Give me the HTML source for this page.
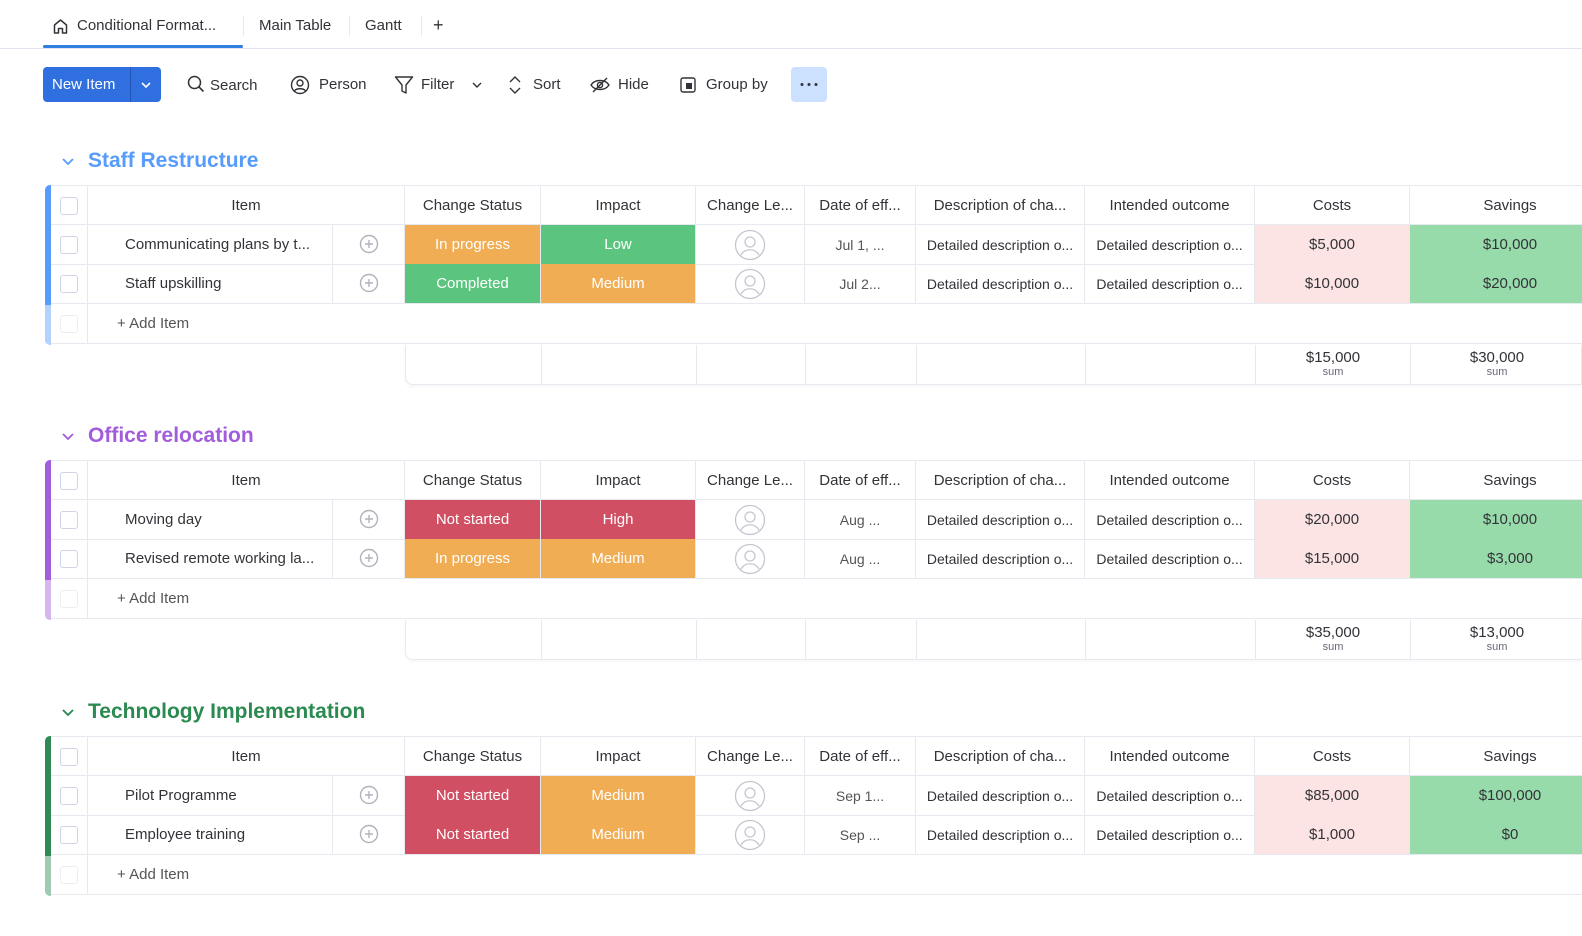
<!DOCTYPE html>
<html><head><meta charset="utf-8"><style>
*{box-sizing:border-box;margin:0;padding:0}
body{width:1582px;height:889px;overflow:hidden;background:#fff;font-family:"Liberation Sans",sans-serif;color:#323338;position:relative}
.a{position:absolute}
.tab{position:absolute;top:17px;font-size:15px;color:#323338}
.sep{position:absolute;top:16px;width:1px;height:20px;background:#e6e9ef}
.tb{position:absolute;top:76px;font-size:15px;color:#323338}
.g{position:absolute;left:0;width:1582px;height:200px}
.title{position:absolute;left:88px;top:-36px;font-size:21px;font-weight:bold}
.chev{position:absolute;left:61px;top:-28px}
.bar{position:absolute;left:45px;top:0;width:6px;height:120px;border-top-left-radius:5px}
.bar2{position:absolute;left:45px;top:120px;width:6px;height:40px;border-bottom-left-radius:5px;opacity:.45}
.r{position:absolute;left:51px;width:1531px;height:40px;border-bottom:1px solid #e6e9ef;border-top:1px solid #e6e9ef}
.c{position:absolute;top:0;height:39px;border-right:1px solid #e6e9ef;display:flex;align-items:center;justify-content:center;font-size:15px;white-space:nowrap;overflow:hidden}
.cb{left:0;width:37px}.it{left:37px;width:245px}.cm{left:282px;width:72px}.st{left:354px;width:136px}.im{left:490px;width:155px}.pe{left:645px;width:109px}.dt{left:754px;width:111px}.ds{left:865px;width:169px}.oc{left:1034px;width:170px}.co{left:1204px;width:155px}.sv{left:1359px;width:200px;border-right:none}
.box{width:18px;height:18px;border:1px solid #d0d4e4;border-radius:3px}
.itx{justify-content:flex-start;padding-left:37px}
.w{color:#fff}
.or{background:#f0ad53}.gr{background:#5bc47e}.rd{background:#d14f63}
.pk{background:#fde4e4}.lg{background:#97dbab}
.sm{font-size:14px}
.dtc{color:#555;font-size:14px}
.sumr{position:absolute;left:405px;top:160px;width:1177px;height:40px;border:1px solid #e6e9ef;border-top:none;border-bottom-left-radius:8px;box-shadow:0 2px 3px rgba(0,0,0,.04)}
.sumr .c{height:39px;flex-direction:column;line-height:14px}
.sumr .s{font-size:11px;color:#676879}
</style></head><body>

<div class="a" style="left:0;top:48px;width:1582px;height:1px;background:#e1e4ec"></div>
<div class="a" style="left:43px;top:45px;width:200px;height:3px;background:#2f7de1;border-radius:2px"></div>
<svg class="a" style="left:52px;top:18px" width="17" height="17" viewBox="0 0 17 17"><path d="M2.5 15V7L8.5 2l6 5v8h-4v-4.5h-4V15z" fill="none" stroke="#323338" stroke-width="1.5" stroke-linejoin="round"/></svg>
<div class="tab" style="left:77px">Conditional Format...</div>
<div class="sep" style="left:243px"></div>
<div class="tab" style="left:259px">Main Table</div>
<div class="sep" style="left:349px"></div>
<div class="tab" style="left:365px">Gantt</div>
<div class="sep" style="left:421px"></div>
<div class="tab" style="left:433px;top:15px;font-size:18px">+</div>

<div class="a" style="left:43px;top:67px;width:118px;height:35px;background:#2f6fe0;border-radius:4px"></div>
<div class="a" style="left:130px;top:67px;width:1px;height:35px;background:#2255b5"></div>
<div class="a" style="left:52px;top:76px;color:#fff;font-size:15px">New Item</div>
<svg class="a" style="left:140px;top:80px" width="12" height="10"><path d="M2 3l4 4 4-4" fill="none" stroke="#fff" stroke-width="1.6"/></svg>

<svg class="a" style="left:187px;top:75px" width="18" height="18"><circle cx="7.5" cy="7.5" r="6" fill="none" stroke="#323338" stroke-width="1.5"/><path d="M12 12l4.5 4.5" stroke="#323338" stroke-width="1.6"/></svg>
<div class="tb" style="left:210px;top:77px">Search</div>
<svg class="a" style="left:290px;top:75px" width="20" height="20"><circle cx="10" cy="10" r="8.5" fill="none" stroke="#323338" stroke-width="1.4"/><circle cx="10" cy="8" r="3" fill="none" stroke="#323338" stroke-width="1.4"/><path d="M4.5 16c1.5-3 9.5-3 11 0" fill="none" stroke="#323338" stroke-width="1.4"/></svg>
<div class="tb" style="left:319px">Person</div>
<svg class="a" style="left:394px;top:75px" width="20" height="20"><path d="M1.5 2h17l-6.5 8v8l-4-2v-6z" fill="none" stroke="#323338" stroke-width="1.4" stroke-linejoin="round"/></svg>
<div class="tb" style="left:421px">Filter</div>
<svg class="a" style="left:471px;top:80px" width="12" height="10"><path d="M2 3l4 4 4-4" fill="none" stroke="#323338" stroke-width="1.4"/></svg>
<svg class="a" style="left:508px;top:75px" width="14" height="20"><path d="M2 7l5-5 5 5M2 13l5 5 5-5" fill="none" stroke="#323338" stroke-width="1.4"/></svg>
<div class="tb" style="left:533px">Sort</div>
<svg class="a" style="left:590px;top:76px" width="20" height="18"><path d="M1 9c4-6 14-6 18 0-4 6-14 6-18 0z" fill="none" stroke="#323338" stroke-width="1.4"/><circle cx="10" cy="9" r="2.6" fill="none" stroke="#323338" stroke-width="1.4"/><path d="M3 16L17 2" stroke="#323338" stroke-width="1.4"/></svg>
<div class="tb" style="left:618px">Hide</div>
<svg class="a" style="left:680px;top:77px" width="16" height="16"><rect x="1" y="1" width="14" height="14" rx="2" fill="none" stroke="#323338" stroke-width="1.4"/><rect x="6" y="6" width="6" height="6" fill="#323338"/></svg>
<div class="tb" style="left:706px">Group by</div>
<div class="a" style="left:791px;top:67px;width:36px;height:35px;background:#cce1ff;border-radius:4px"></div>
<svg class="a" style="left:799px;top:82px" width="20" height="5"><circle cx="3" cy="2.5" r="1.5" fill="#323338"/><circle cx="10" cy="2.5" r="1.5" fill="#323338"/><circle cx="17" cy="2.5" r="1.5" fill="#323338"/></svg>

<!-- GROUP 1 -->
<div class="g" style="top:185px">
<svg class="chev" width="14" height="10"><path d="M2 2l5 5 5-5" fill="none" stroke="#579bfc" stroke-width="1.8"/></svg>
<div class="title" style="color:#579bfc">Staff Restructure</div>
<div class="bar" style="background:#579bfc"></div><div class="bar2" style="background:#579bfc"></div>
<div class="r" style="top:0"><div class="c cb"><div class="box"></div></div><div class="c it" style="width:317px">Item</div><div class="c st">Change Status</div><div class="c im">Impact</div><div class="c pe">Change Le...</div><div class="c dt">Date of eff...</div><div class="c ds">Description of cha...</div><div class="c oc">Intended outcome</div><div class="c co">Costs</div><div class="c sv">Savings</div></div>
<div class="r" style="top:40px;border-top:none"><div class="c cb"><div class="box"></div></div><div class="c it itx">Communicating plans by t...</div><div class="c cm"><svg width="22" height="22"><circle cx="11" cy="10" r="8.5" fill="none" stroke="#b0b3bd" stroke-width="1.4"/><path d="M11 6v8M7 10h8" stroke="#b0b3bd" stroke-width="1.4"/></svg></div><div class="c st or w">In progress</div><div class="c im gr w">Low</div><div class="c pe"><svg width="32" height="32"><circle cx="16" cy="16" r="14.5" fill="none" stroke="#c5c7d0" stroke-width="1.3"/><circle cx="16" cy="13" r="5" fill="none" stroke="#c5c7d0" stroke-width="1.3"/><path d="M7 26c4-7 14-7 18 0" fill="none" stroke="#c5c7d0" stroke-width="1.3"/></svg></div><div class="c dt dtc">Jul 1, ...</div><div class="c ds sm">Detailed description o...</div><div class="c oc sm">Detailed description o...</div><div class="c co pk">$5,000</div><div class="c sv lg">$10,000</div></div>
<div class="r" style="top:79px;border-top:none"><div class="c cb"><div class="box"></div></div><div class="c it itx">Staff upskilling</div><div class="c cm"><svg width="22" height="22"><circle cx="11" cy="10" r="8.5" fill="none" stroke="#b0b3bd" stroke-width="1.4"/><path d="M11 6v8M7 10h8" stroke="#b0b3bd" stroke-width="1.4"/></svg></div><div class="c st gr w">Completed</div><div class="c im or w">Medium</div><div class="c pe"><svg width="32" height="32"><circle cx="16" cy="16" r="14.5" fill="none" stroke="#c5c7d0" stroke-width="1.3"/><circle cx="16" cy="13" r="5" fill="none" stroke="#c5c7d0" stroke-width="1.3"/><path d="M7 26c4-7 14-7 18 0" fill="none" stroke="#c5c7d0" stroke-width="1.3"/></svg></div><div class="c dt dtc">Jul 2...</div><div class="c ds sm">Detailed description o...</div><div class="c oc sm">Detailed description o...</div><div class="c co pk">$10,000</div><div class="c sv lg">$20,000</div></div>
<div class="r" style="top:119px;border-top:none"><div class="c cb"><div class="box" style="border-color:#eceef3"></div></div><div class="c" style="left:37px;width:1494px;border:none;justify-content:flex-start;padding-left:29px;color:#555">+ Add Item</div></div>
<div class="sumr"><div class="c" style="left:0;width:136px"></div><div class="c" style="left:136px;width:155px"></div><div class="c" style="left:291px;width:109px"></div><div class="c" style="left:400px;width:111px"></div><div class="c" style="left:511px;width:169px"></div><div class="c" style="left:680px;width:170px"></div><div class="c" style="left:850px;width:155px"><div>$15,000</div><div class="s">sum</div></div><div class="c" style="left:1005px;width:172px;border:none"><div>$30,000</div><div class="s">sum</div></div></div>
</div>

<!-- GROUP 2 -->
<div class="g" style="top:460px">
<svg class="chev" width="14" height="10"><path d="M2 2l5 5 5-5" fill="none" stroke="#a25ddc" stroke-width="1.8"/></svg>
<div class="title" style="color:#a25ddc">Office relocation</div>
<div class="bar" style="background:#a25ddc"></div><div class="bar2" style="background:#a25ddc"></div>
<div class="r" style="top:0"><div class="c cb"><div class="box"></div></div><div class="c it" style="width:317px">Item</div><div class="c st">Change Status</div><div class="c im">Impact</div><div class="c pe">Change Le...</div><div class="c dt">Date of eff...</div><div class="c ds">Description of cha...</div><div class="c oc">Intended outcome</div><div class="c co">Costs</div><div class="c sv">Savings</div></div>
<div class="r" style="top:40px;border-top:none"><div class="c cb"><div class="box"></div></div><div class="c it itx">Moving day</div><div class="c cm"><svg width="22" height="22"><circle cx="11" cy="10" r="8.5" fill="none" stroke="#b0b3bd" stroke-width="1.4"/><path d="M11 6v8M7 10h8" stroke="#b0b3bd" stroke-width="1.4"/></svg></div><div class="c st rd w">Not started</div><div class="c im rd w">High</div><div class="c pe"><svg width="32" height="32"><circle cx="16" cy="16" r="14.5" fill="none" stroke="#c5c7d0" stroke-width="1.3"/><circle cx="16" cy="13" r="5" fill="none" stroke="#c5c7d0" stroke-width="1.3"/><path d="M7 26c4-7 14-7 18 0" fill="none" stroke="#c5c7d0" stroke-width="1.3"/></svg></div><div class="c dt dtc">Aug ...</div><div class="c ds sm">Detailed description o...</div><div class="c oc sm">Detailed description o...</div><div class="c co pk">$20,000</div><div class="c sv lg">$10,000</div></div>
<div class="r" style="top:79px;border-top:none"><div class="c cb"><div class="box"></div></div><div class="c it itx">Revised remote working la...</div><div class="c cm"><svg width="22" height="22"><circle cx="11" cy="10" r="8.5" fill="none" stroke="#b0b3bd" stroke-width="1.4"/><path d="M11 6v8M7 10h8" stroke="#b0b3bd" stroke-width="1.4"/></svg></div><div class="c st or w">In progress</div><div class="c im or w">Medium</div><div class="c pe"><svg width="32" height="32"><circle cx="16" cy="16" r="14.5" fill="none" stroke="#c5c7d0" stroke-width="1.3"/><circle cx="16" cy="13" r="5" fill="none" stroke="#c5c7d0" stroke-width="1.3"/><path d="M7 26c4-7 14-7 18 0" fill="none" stroke="#c5c7d0" stroke-width="1.3"/></svg></div><div class="c dt dtc">Aug ...</div><div class="c ds sm">Detailed description o...</div><div class="c oc sm">Detailed description o...</div><div class="c co pk">$15,000</div><div class="c sv lg">$3,000</div></div>
<div class="r" style="top:119px;border-top:none"><div class="c cb"><div class="box" style="border-color:#eceef3"></div></div><div class="c" style="left:37px;width:1494px;border:none;justify-content:flex-start;padding-left:29px;color:#555">+ Add Item</div></div>
<div class="sumr"><div class="c" style="left:0;width:136px"></div><div class="c" style="left:136px;width:155px"></div><div class="c" style="left:291px;width:109px"></div><div class="c" style="left:400px;width:111px"></div><div class="c" style="left:511px;width:169px"></div><div class="c" style="left:680px;width:170px"></div><div class="c" style="left:850px;width:155px"><div>$35,000</div><div class="s">sum</div></div><div class="c" style="left:1005px;width:172px;border:none"><div>$13,000</div><div class="s">sum</div></div></div>
</div>

<!-- GROUP 3 -->
<div class="g" style="top:736px">
<svg class="chev" width="14" height="10"><path d="M2 2l5 5 5-5" fill="none" stroke="#258750" stroke-width="1.8"/></svg>
<div class="title" style="color:#2b8a4f">Technology Implementation</div>
<div class="bar" style="background:#2f8a55"></div><div class="bar2" style="background:#2f8a55"></div>
<div class="r" style="top:0"><div class="c cb"><div class="box"></div></div><div class="c it" style="width:317px">Item</div><div class="c st">Change Status</div><div class="c im">Impact</div><div class="c pe">Change Le...</div><div class="c dt">Date of eff...</div><div class="c ds">Description of cha...</div><div class="c oc">Intended outcome</div><div class="c co">Costs</div><div class="c sv">Savings</div></div>
<div class="r" style="top:40px;border-top:none"><div class="c cb"><div class="box"></div></div><div class="c it itx">Pilot Programme</div><div class="c cm"><svg width="22" height="22"><circle cx="11" cy="10" r="8.5" fill="none" stroke="#b0b3bd" stroke-width="1.4"/><path d="M11 6v8M7 10h8" stroke="#b0b3bd" stroke-width="1.4"/></svg></div><div class="c st rd w">Not started</div><div class="c im or w">Medium</div><div class="c pe"><svg width="32" height="32"><circle cx="16" cy="16" r="14.5" fill="none" stroke="#c5c7d0" stroke-width="1.3"/><circle cx="16" cy="13" r="5" fill="none" stroke="#c5c7d0" stroke-width="1.3"/><path d="M7 26c4-7 14-7 18 0" fill="none" stroke="#c5c7d0" stroke-width="1.3"/></svg></div><div class="c dt dtc">Sep 1...</div><div class="c ds sm">Detailed description o...</div><div class="c oc sm">Detailed description o...</div><div class="c co pk">$85,000</div><div class="c sv lg">$100,000</div></div>
<div class="r" style="top:79px;border-top:none"><div class="c cb"><div class="box"></div></div><div class="c it itx">Employee training</div><div class="c cm"><svg width="22" height="22"><circle cx="11" cy="10" r="8.5" fill="none" stroke="#b0b3bd" stroke-width="1.4"/><path d="M11 6v8M7 10h8" stroke="#b0b3bd" stroke-width="1.4"/></svg></div><div class="c st rd w">Not started</div><div class="c im or w">Medium</div><div class="c pe"><svg width="32" height="32"><circle cx="16" cy="16" r="14.5" fill="none" stroke="#c5c7d0" stroke-width="1.3"/><circle cx="16" cy="13" r="5" fill="none" stroke="#c5c7d0" stroke-width="1.3"/><path d="M7 26c4-7 14-7 18 0" fill="none" stroke="#c5c7d0" stroke-width="1.3"/></svg></div><div class="c dt dtc">Sep ...</div><div class="c ds sm">Detailed description o...</div><div class="c oc sm">Detailed description o...</div><div class="c co pk">$1,000</div><div class="c sv lg">$0</div></div>
<div class="r" style="top:119px;border-top:none"><div class="c cb"><div class="box" style="border-color:#eceef3"></div></div><div class="c" style="left:37px;width:1494px;border:none;justify-content:flex-start;padding-left:29px;color:#555">+ Add Item</div></div>
</div>

</body></html>
